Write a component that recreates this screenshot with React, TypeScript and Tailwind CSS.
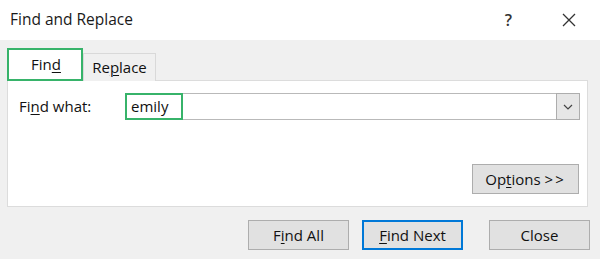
import React from "react";

const font = { fontFamily: '"Open Sans", "Noto Sans", "Liberation Sans", sans-serif' };

function U({ children }: { children: React.ReactNode }) {
  return <span className="underline underline-offset-[2px] decoration-[1px]">{children}</span>;
}

export default function App() {
  return (
    <div className="w-[600px] h-[259px] bg-[#f0f0f0] flex flex-col text-[#111] overflow-hidden" style={font}>
      <div className="h-[40px] bg-white flex items-center shrink-0">
        <div className="ml-[10px] text-[15.5px] leading-none text-[#1a1a1a]">Find and Replace</div>
        <div className="ml-auto mr-[50px] text-[16px] leading-none font-semibold text-[#333]">?</div>
        <svg className="mr-[24px]" width="14" height="14" viewBox="0 0 14 14">
          <path d="M1 1L13 13M13 1L1 13" stroke="#333" strokeWidth="1.3" />
        </svg>
      </div>
      <div className="flex flex-col pl-[7px]">
        <div className="flex items-end mt-[8px] h-[33px] relative z-10">
          <div className="w-[76px] h-[33px] border-2 border-[#37b36a] bg-white flex items-center justify-center text-[15px]">
            <span className="pl-[2px]">Fin<U>d</U></span>
          </div>
          <div className="w-[73px] h-[28px] border border-b-0 border-[#d9d9d9] bg-[#f0f0f0] flex items-center justify-center text-[15px]">
            Re<U>p</U>lace
          </div>
        </div>
        <div className="w-[581px] h-[127px] -mt-[1px] bg-white border border-[#dcdcdc] flex flex-col">
          <div className="flex items-center mt-[12px] h-[27px]">
            <div className="ml-[11px] w-[106px] text-[15px]">
              Fi<U>n</U>d what:
            </div>
            <div className="w-[455px] h-[27px] border border-[#b9b9b9] flex items-stretch relative">
              <div className="absolute -left-[1px] -top-[1px] w-[58px] h-[27px] border-2 border-[#37b36a]" />
              <div className="flex-1 pl-[5px] flex items-center text-[15px]">emily</div>
              <div className="w-[24px] bg-[#e6e6e6] border border-[#adadad] -my-[1px] -mr-[1px] flex items-center justify-center">
                <svg width="10" height="6" viewBox="0 0 10 6">
                  <path d="M1 1L5 5L9 1" stroke="#444" strokeWidth="1.2" fill="none" />
                </svg>
              </div>
            </div>
          </div>
          <div className="flex justify-end mt-[44px] mr-[8px]">
            <div className="w-[107px] h-[30px] bg-[#e1e1e1] border border-[#adadad] flex items-center justify-center text-[15px]">
              Op<U>t</U>ions <span className="ml-[4px] tracking-[2px]">&gt;&gt;</span>
            </div>
          </div>
        </div>
        <div className="flex mt-[13px] items-center">
          <div className="ml-[241px] w-[101px] h-[30px] bg-[#e1e1e1] border border-[#adadad] flex items-center justify-center text-[15px]">
            F<U>i</U>nd All
          </div>
          <div className="ml-[13px] w-[101px] h-[30px] bg-[#e1e1e1] border-2 border-[#0078d7] flex items-center justify-center text-[15px]">
            <U>F</U>ind Next
          </div>
          <div className="ml-[26px] w-[101px] h-[30px] bg-[#e1e1e1] border border-[#adadad] flex items-center justify-center text-[15px]">
            Close
          </div>
        </div>
      </div>
    </div>
  );
}
